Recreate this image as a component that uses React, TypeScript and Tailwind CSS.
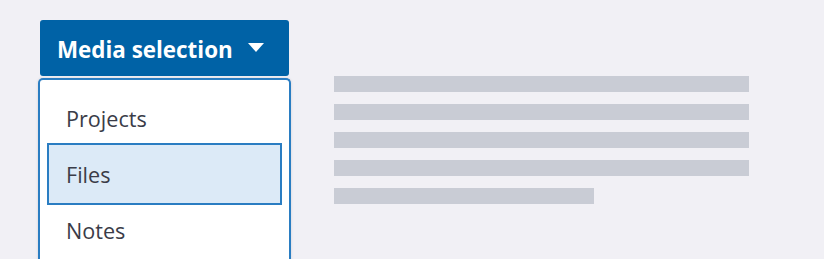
import React from "react";

export default function App() {
  const font = { fontFamily: '"Open Sans", "Noto Sans", sans-serif' };
  return (
    <div
      className="w-[824px] h-[259px] overflow-hidden bg-[#f1f0f5] pl-[40px] pt-[20px] flex items-start"
      style={font}
    >
      <div className="flex flex-col w-[249px] shrink-0">
        <button className="shrink-0 h-[56px] w-[249px] rounded-[3px] bg-[#0062a6] text-white font-bold text-[22.4px] flex items-center pl-[17px] pt-[3px]">
          <span>Media selection</span>
          <svg className="ml-[15px] mt-[-3px]" width="16" height="10" viewBox="0 0 16 10">
            <path d="M0 0 H16 L8 9 Z" fill="white" />
          </svg>
        </button>
        <div className="shrink-0 mt-[2px] -mx-[2px] h-[200px] rounded-t-[5px] border-2 border-b-0 border-[#2a7dc2] bg-white shadow-[0_0_3px_rgba(0,0,0,0.12)] px-[7px] pt-[7px] text-[21.6px] text-[#3a3c48]">
          <div className="h-[56px] pt-[8px] pl-[19px] flex items-center">Projects</div>
          <div className="h-[62px] pt-[2px] pl-[17px] flex items-center border-2 border-[#2a7dc2] bg-[#dceaf7]">
            Files
          </div>
          <div className="h-[52px] pl-[19px] flex items-center">Notes</div>
        </div>
      </div>
      <div className="ml-[45px] mt-[56px] flex flex-col gap-[12px]">
        <div className="h-[16px] w-[415px] bg-[#c9ccd5]" />
        <div className="h-[16px] w-[415px] bg-[#c9ccd5]" />
        <div className="h-[16px] w-[415px] bg-[#c9ccd5]" />
        <div className="h-[16px] w-[415px] bg-[#c9ccd5]" />
        <div className="h-[16px] w-[260px] bg-[#c9ccd5]" />
      </div>
    </div>
  );
}
